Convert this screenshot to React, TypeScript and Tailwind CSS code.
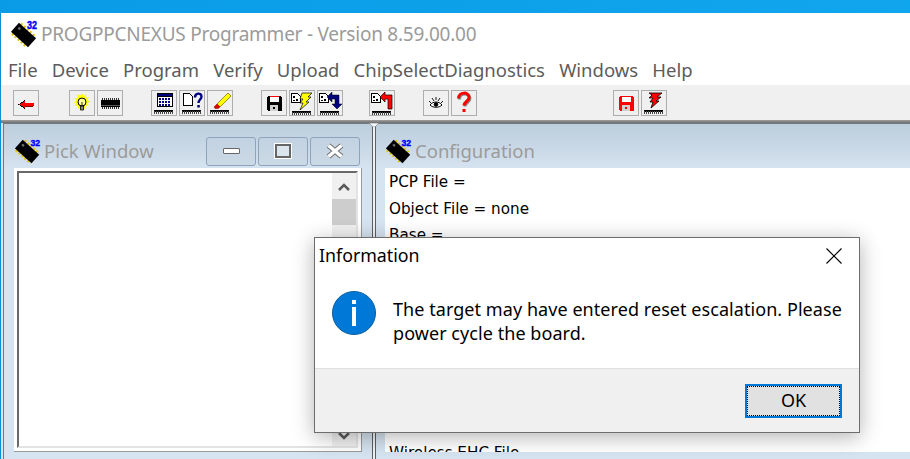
import React from "react";

const sans = "font-['Noto_Sans','Open_Sans',sans-serif]";

function Base({ x = 3, y = 20, w = 19 }: { x?: number; y?: number; w?: number }) {
  const teeth = [];
  for (let i = 0; i < w; i += 2) teeth.push(<rect key={i} x={x + i} y={y + 1} width={1} height={3} fill="#444" />);
  return (
    <g shapeRendering="crispEdges">
      <rect x={x} y={y} width={w} height={1.5} fill="#000" />
      {teeth}
    </g>
  );
}

function SmallDoc({ x = 2, y = 3 }: { x?: number; y?: number }) {
  return (
    <g shapeRendering="crispEdges">
      <path d={`M${x + .5} ${y + .5}h6l3 3v6h-9z`} fill="#fff" stroke="#000" />
      <rect x={x + 2} y={y + 3} width={2} height={2} fill="#000" />
      <rect x={x + 5} y={y + 6} width={2} height={2} fill="#000" />
      <rect x={x + 2} y={y + 7} width={2} height={1} fill="#000" />
    </g>
  );
}

function Floppy({ body, stripe, hub, label }: { body: string; stripe: string; hub: string; label: string }) {
  return (
    <g shapeRendering="crispEdges">
      <path d="M6 7l1-1h12l2 2v12l-1 1H7l-1-1z" fill={body} />
      <rect x={9} y={6} width={9} height={1} fill={stripe} />
      <rect x={9} y={7} width={9} height={5} fill={label} />
      <rect x={9} y={15} width={8} height={6} fill="#d0d0d0" />
      <rect x={12} y={17} width={2} height={2} fill={hub} />
    </g>
  );
}

const icons: Record<string, React.ReactNode> = {
  back: (
    <g shapeRendering="crispEdges">
      <path d="M5 14.500l7-4.500v3h9v3h-9v3z" fill="#f00" />
      <path d="M5 14.500l7-4.500v1l-5.500 3.500 5.500 3.500v1z" fill="#000" />
      <rect x={12} y={16} width={8} height={1} fill="#800" />
    </g>
  ),
  bulb: (
    <g>
      <path d="M13 3l1.500 3 3-2-1 3.500 3.500-.5-2 3 3.500 1.500-3.500 1.500 2 3-3.500-.5v3H9v-3l-3.500.5 2-3L4 12.500 7.500 11l-2-3 3.500.5L8 4l3 2z" fill="#ffff00" />
      <circle cx={13} cy={12} r={4} fill="#ffff99" stroke="#000" strokeWidth={1} />
      <path d="M11.500 16h3v4h-3z" fill="#888" stroke="#000" strokeWidth={.8} />
      <path d="M13 12v4" stroke="#000" strokeWidth={.8} />
    </g>
  ),
  chip: (
    <g shapeRendering="crispEdges">
      <rect x={4} y={10} width={19} height={7} rx={1} fill="#000" />
      <rect x={4} y={15} width={19} height={1} fill="#555" />
      {[5, 7, 9, 11, 13, 15, 17, 19, 21].map((x) => (
        <g key={x}>
          <rect x={x} y={8} width={1} height={2} fill="#333" />
          <rect x={x} y={17} width={1} height={2} fill="#333" />
        </g>
      ))}
    </g>
  ),
  table: (
    <g shapeRendering="crispEdges">
      <Base />
      <rect x={6} y={3} width={16} height={14} fill="#000" />
      <rect x={7} y={4} width={14} height={2} fill="#000080" />
      <rect x={7} y={7} width={14} height={9} fill="#fff" />
      {[8, 11, 14, 17].map((x) => [8, 11, 14].map((y) => <rect key={`${x}${y}`} x={x} y={y} width={2} height={1.500} fill="#000080" />))}
    </g>
  ),
  docq: (
    <g>
      <Base />
      <path d="M4.500 3.500h6l3 3v9h-9z" fill="#fff" stroke="#000" shapeRendering="crispEdges" />
      <path d="M16 7.500c0-5 6.500-5 6.500-1 0 3-3 3-3 6.500" fill="none" stroke="#000080" strokeWidth={2.400} />
      <rect x={18.300} y={15} width={2.500} height={2.500} fill="#000080" />
    </g>
  ),
  eraser: (
    <g>
      <Base />
      <path d="M10 14L21 3l3 3-11 11z" fill="#ffff00" stroke="#806000" strokeWidth={.7} />
      <path d="M10 14l-3 3 1 1.500h3l2-1.500z" fill="#e00000" stroke="#800" strokeWidth={.5} />
    </g>
  ),
  save: <Floppy body="#000" stripe="#f00" label="#fff" hub="#000" />,
  flash: (
    <g>
      <Base y={21} />
      <SmallDoc />
      <path d="M13 3h10l-4 4h3l-5 5h3l-9 8 3-7h-3l3-4h-3z" fill="#ffff00" stroke="#000" strokeWidth={.7} />
    </g>
  ),
  upblue: (
    <g>
      <Base y={21} />
      <SmallDoc />
      <path d="M10 7l5-5v3h7v9h3l-5 5-5-5h3V9h-3v3z" fill="#000080" stroke="#000" strokeWidth={.5} />
    </g>
  ),
  upred: (
    <g>
      <Base y={21} />
      <SmallDoc />
      <path d="M11 7l5-5v3h7v14h-4V9h-3v3z" fill="#f00" stroke="#000" strokeWidth={.7} />
    </g>
  ),
  eye: (
    <g fill="none" stroke="#000">
      <path d="M7 15c3-4 9-4 12 0-3 3-9 3-12 0z" fill="#fff" />
      <circle cx={13} cy={14.500} r={1.800} fill="#000" />
      <path d="M6 11l2 2M9 8l2 3M13 7v3M17 8l-2 3M20 11l-2 2" strokeWidth={.9} />
    </g>
  ),
  help: (
    <g fill="none">
      <path d="M8.500 9.500c0-7 10.500-7 10.500-1 0 4-5 4-5 8" stroke="#888" strokeWidth={3} />
      <path d="M7.500 8.500c0-7 10.500-7 10.500-1 0 4-5 4-5 8" stroke="#f00" strokeWidth={3} />
      <rect x={11.500} y={19} width={3} height={3} fill="#f00" />
    </g>
  ),
  savered: <Floppy body="#f00" stripe="#f00" label="#fff" hub="#f00" />,
  flashred: (
    <g>
      <Base y={20} />
      <path d="M8 3h13l-5 4h4l-5 4h3l-8 7 2-6H9l3-4H8l3-3z" fill="#f00" stroke="#000" strokeWidth={.8} />
    </g>
  ),
};

function ToolButton({ name, className = "" }: { name: string; className?: string }) {
  return (
    <div className={`w-[26px] h-[26px] border border-[#adadad] shrink-0 ${className}`}>
      <svg viewBox="1 1 24 24" width={24} height={24}>{icons[name]}</svg>
    </div>
  );
}

function ChipLogo({ size = 30 }: { size?: number }) {
  const pins = [4, 8, 12, 16, 20];
  return (
    <svg viewBox="0 0 30 30" width={size} height={size} className="shrink-0">
      <g transform="translate(-1 1) rotate(42 13.500 14)">
        {pins.map((p) => (
          <g key={p}>
            <rect x={p} y={6} width={2} height={3} fill="#e6c200" />
            <rect x={p} y={19} width={2} height={3} fill="#e6c200" />
          </g>
        ))}
        <rect x={2} y={8} width={23} height={12} fill="#000" />
        <circle cx={6} cy={12} r={1.500} fill="#666" />
      </g>
      <text x={16} y={9} fontSize={10} fontWeight={700} fill="#0000ff" stroke="#0000ff" strokeWidth={.4} textLength={10} lengthAdjust="spacingAndGlyphs" fontFamily="Liberation Sans, sans-serif">32</text>
    </svg>
  );
}

function CaptionButton({ children }: { children: React.ReactNode }) {
  return (
    <div className="w-[50px] h-[29px] border border-[#8fa3bd] rounded-[3px] bg-gradient-to-b from-[#c2d2e2] to-[#ccd9e6] flex items-center justify-center">
      {children}
    </div>
  );
}

const menus = ["File", "Device", "Program", "Verify", "Upload", "ChipSelectDiagnostics", "Windows", "Help"];

export default function App() {
  return (
    <div className={`relative w-[910px] h-[459px] overflow-hidden bg-white flex flex-col ${sans}`}>
      <div className="h-[13px] shrink-0 bg-gradient-to-r from-[#0a9be6] to-[#10a6ee]" />
      <div className="flex-1 min-h-0 flex flex-col border-l border-[#0b8fd4]">
        <div className="h-[42px] shrink-0 flex items-center pl-[10px] pt-[1px]">
          <ChipLogo />
          <span className="text-[19px] text-[#9b9b9b] tracking-[-0.24px] whitespace-nowrap">PROGPPCNEXUS Programmer - Version 8.59.00.00</span>
        </div>
        <div className="h-[30px] shrink-0 flex items-center pl-[7px] gap-[14.200px] text-[18.500px] text-[#5c5c5c] whitespace-nowrap">
          {menus.map((m) => <span key={m}>{m}</span>)}
        </div>
        <div className="h-[35px] shrink-0 bg-[#f0f0f0] flex items-center pl-[12px] pt-[1px]">
          <ToolButton name="back" />
          <ToolButton name="bulb" className="ml-[30px]" />
          <ToolButton name="chip" className="ml-[2px]" />
          <ToolButton name="table" className="ml-[28px]" />
          <ToolButton name="docq" className="ml-[2px]" />
          <ToolButton name="eraser" className="ml-[2px]" />
          <ToolButton name="save" className="ml-[28px]" />
          <ToolButton name="flash" className="ml-[2px]" />
          <ToolButton name="upblue" className="ml-[2px]" />
          <ToolButton name="upred" className="ml-[26px]" />
          <ToolButton name="eye" className="ml-[28px]" />
          <ToolButton name="help" className="ml-[2px]" />
          <ToolButton name="savered" className="ml-[136px]" />
          <ToolButton name="flashred" className="ml-[2px]" />
        </div>
        <div className="h-[3px] shrink-0 bg-gradient-to-b from-[#a0a0a0] to-[#6e6e6e]" />
        <div className="flex-1 min-h-0 flex bg-[#d6e3f0]">
          {/* left pane */}
          <div className="w-[369px] ml-[2px] shrink-0 border-l border-t border-[#6e7c88] flex flex-col bg-gradient-to-b from-[#bccddc] from-0% to-[#d6e3f0] to-[45px]">
            <div className="h-[44px] shrink-0 flex items-center pl-[11px] pr-[12px] pt-[10px]">
              <ChipLogo size={29} />
              <span className="text-[18.500px] text-[#9b9b9b]">Pick Window</span>
              <div className="ml-auto flex gap-[2px]">
                <CaptionButton><div className="w-[17px] h-[6px] bg-white border border-[#666] rounded-[1px]" /></CaptionButton>
                <CaptionButton><div className="w-[16px] h-[14px] border-2 border-[#666] bg-[#dbe5ee] shadow-[0_0_0_1px_#fff]" /></CaptionButton>
                <CaptionButton>
                  <svg width={20} height={16} viewBox="0 0 20 16"><path d="M3.500 2.500l13 11M16.500 2.500l-13 11" stroke="#707070" strokeWidth={5.500} /><path d="M3.500 2.500l13 11M16.500 2.500l-13 11" stroke="#fff" strokeWidth={3.500} /></svg>
                </CaptionButton>
              </div>
            </div>
            <div className="ml-[10px] w-[348px] h-[284px] bg-white border-r border-b border-[#9a9a9a] pl-[3px] pr-[3px] pt-[3px] pb-[3px] shrink-0">
              <div className="h-full flex border-t-2 border-l-2 border-[#696969] border-r-2 border-b-2 border-r-[#e3e3e3] border-b-[#e3e3e3]">
                <div className="flex-1" />
                <div className="w-[24px] bg-[#f0f0f0] flex flex-col items-center">
                  <svg width={24} height={26} viewBox="0 0 24 26" className="shrink-0"><path d="M7 17l5-5 5 5" fill="none" stroke="#5a5a5a" strokeWidth={2.500} /></svg>
                  <div className="w-[24px] h-[26px] bg-[#cdcdcd]" />
                  <div className="flex-1" />
                  <svg width={24} height={20} viewBox="0 0 24 20" className="shrink-0"><path d="M7 7l5 5 5-5" fill="none" stroke="#5a5a5a" strokeWidth={2.500} /></svg>
                </div>
              </div>
            </div>
          </div>
          {/* sash */}
          <div className="relative w-[4px] shrink-0 border-x border-[#5f5f5f] bg-[#eef2f6]">
            <svg width={10} height={4} viewBox="0 0 10 4" className="absolute -left-[4px] top-0"><path d="M0 0h10L6 4H4z" fill="#f4f6f8" stroke="#777" strokeWidth={.6} /></svg>
          </div>
          {/* right pane */}
          <div className="flex-1 min-w-0 flex flex-col bg-gradient-to-b from-[#bccddc] from-0% to-[#d6e3f0] to-[45px] border-t border-[#6e7c88]">
            <div className="h-[44px] shrink-0 flex items-center pl-[10px] pt-[10px]">
              <ChipLogo size={29} />
              <span className="text-[18.500px] text-[#9b9b9b]">Configuration</span>
            </div>
            <div className="ml-[9px] h-[284px] bg-white overflow-hidden pl-[4px] pt-[1px] text-[15.200px] text-black font-['DejaVu_Sans',sans-serif] shrink-0 flex flex-col">
              <div className="h-[26.500px] leading-[26.500px] shrink-0">PCP File =</div>
              <div className="h-[26.500px] leading-[26.500px] shrink-0">Object File = none</div>
              <div className="h-[26.500px] leading-[26.500px] shrink-0">Base =</div>
              <div className="mt-[191px] h-[26.500px] leading-[26.500px] shrink-0">Wireless EHC File</div>
            </div>
          </div>
        </div>
      </div>

      {/* message box */}
      <div className="absolute left-[314px] top-[237px] w-[546px] h-[196px] border border-[#6d6d6d] bg-white shadow-[0_4px_20px_rgba(0,0,0,0.3)] flex flex-col text-[18px] text-black">
        <div className="h-[35px] shrink-0 flex items-center pl-[4px] pr-[17px] justify-between">
          <span className="text-[17.800px]">Information</span>
          <svg width={16} height={16} viewBox="0 0 16 16"><path d="M.5.5l15 15M15.500.5l-15 15" stroke="#000" strokeWidth={1.100} /></svg>
        </div>
        <div className="flex-1 flex items-start pl-[17px] pr-[16px] pt-[18px]">
          <svg width={44} height={44} viewBox="0 0 44 44" className="shrink-0">
            <circle cx={22} cy={22} r={21.500} fill="#0078d7" stroke="#0a5f9f" strokeWidth={1} />
            <rect x={20} y={9} width={4} height={4} fill="#fff" />
            <rect x={20} y={16} width={4} height={19} fill="#fff" />
          </svg>
          <p className="ml-[17px] mt-[6px] leading-[24px] tracking-[0.06px]">The target may have entered reset escalation. Please power cycle the board.</p>
        </div>
        <div className="h-[64px] shrink-0 bg-[#f0f0f0] border-t border-[#dfdfdf] flex items-center justify-end pr-[17px]">
          <div className="w-[97px] h-[34px] border-2 border-[#0078d7] bg-[#e1e1e1] flex">
            <div className="flex-1 border border-dotted border-black flex items-center justify-center">OK</div>
          </div>
        </div>
      </div>
    </div>
  );
}
